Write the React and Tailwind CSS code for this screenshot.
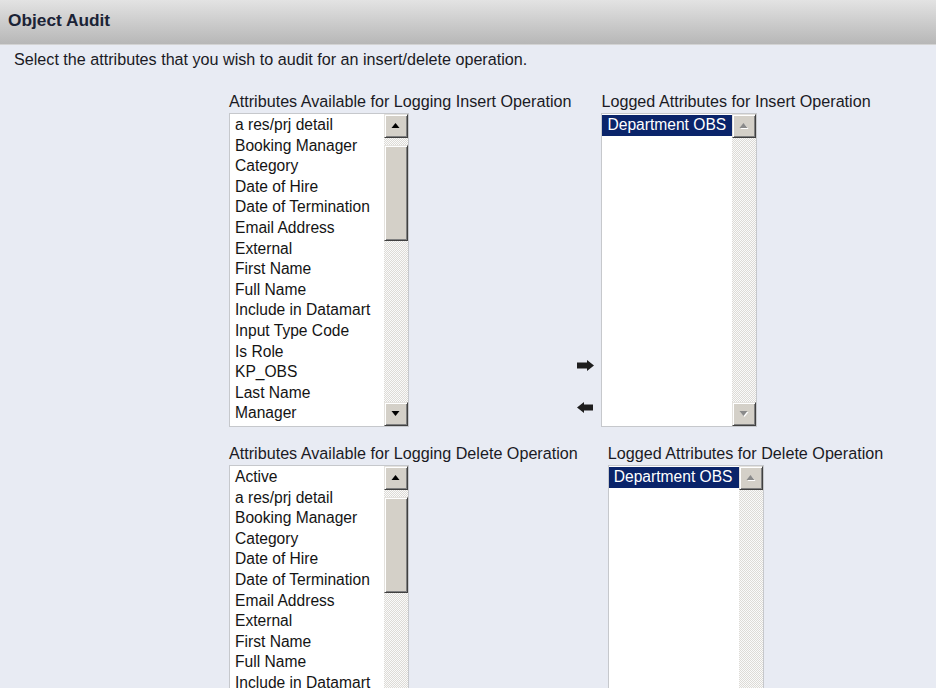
import React from 'react';

// Attribute lists shown in the two pick boxes
const insertAvailable = [
  'a res/prj detail',
  'Booking Manager',
  'Category',
  'Date of Hire',
  'Date of Termination',
  'Email Address',
  'External',
  'First Name',
  'Full Name',
  'Include in Datamart',
  'Input Type Code',
  'Is Role',
  'KP_OBS',
  'Last Name',
  'Manager',
];

const deleteAvailable = ['Active', ...insertAvailable.slice(0, 10)];

const Triangle = ({ dir = 'up', disabled = false }) => (
  <svg width="10" height="7" viewBox="0 0 10 7">
    {disabled && (
      <polygon
        points={dir === 'up' ? '1.5,6 5.5,1 9.5,6' : '1.5,1 9.5,1 5.5,6'}
        fill="#ffffff"
      />
    )}
    <polygon
      points={dir === 'up' ? '0.5,5 4.5,0 8.5,5' : '0.5,0 8.5,0 4.5,5'}
      fill={disabled ? '#8a8a8a' : '#000000'}
    />
  </svg>
);

// Classic raised 3D button face
const Raised = ({ className = '', children }) => (
  <div
    className={`flex items-center justify-center bg-[#d4d0c8] border border-t-[#e4e2de] border-l-[#e4e2de] border-b-[#404040] border-r-[#404040] shadow-[inset_1px_1px_0_#ffffff,inset_-1px_-1px_0_#808080] ${className}`}
  >
    {children}
  </div>
);

const ScrollBar = ({ disabled }) => (
  <div className="flex flex-col w-[24px] h-full bg-[repeating-conic-gradient(#dddbd6_0_25%,#fafafa_0_50%)] bg-[length:2px_2px]">
    <Raised className="h-[24px] w-[24px] shrink-0">
      <Triangle dir="up" disabled={disabled} />
    </Raised>
    <div className="flex-1 pt-[7px]">
      {!disabled && <Raised className="h-[96px] w-[24px]" />}
    </div>
    <Raised className="h-[24px] w-[24px] shrink-0">
      <Triangle dir="down" disabled={disabled} />
    </Raised>
  </div>
);

const ListBox = ({ items, width, selected, disabled }) => (
  <div
    className="flex bg-white border border-[#c6c8cc] h-[314px] overflow-hidden"
    style={{ width }}
  >
    <div className="flex-1 pt-[1px] overflow-hidden">
      {items.map((item) => (
        <div
          key={item}
          className={`h-[20.6px] leading-[20.6px] pl-[5px] text-[15.6px] whitespace-nowrap ${
            item === selected ? 'bg-[#0a246a] text-white' : 'text-[#141414]'
          }`}
        >
          {item}
        </div>
      ))}
    </div>
    <ScrollBar disabled={disabled} />
  </div>
);

const RightArrow = () => (
  <svg width="17" height="11" viewBox="0 0 17 11">
    <polygon points="0,2.5 10,2.5 10,0 17,5.5 10,11 10,8.5 0,8.5" fill="#1e1e1e" />
  </svg>
);

const LeftArrow = () => (
  <svg width="16" height="11" viewBox="0 0 16 11">
    <polygon points="16,2.5 7,2.5 7,0 0,5.5 7,11 7,8.5 16,8.5" fill="#1e1e1e" />
  </svg>
);

const AuditRow = ({ leftLabel, rightLabel, items }) => (
  <div className="flex">
    <div className="flex flex-col">
      <p className="text-[16.15px] leading-[18px] mb-[3px] text-[#1a1a24] whitespace-nowrap">{leftLabel}</p>
      <ListBox items={items} width={180} />
    </div>
    <div className="w-[30px] flex flex-col justify-end pl-[6px] pb-[14px] gap-[31px]">
      <RightArrow />
      <LeftArrow />
    </div>
    <div className="flex flex-col">
      <p className="text-[16.15px] leading-[18px] mb-[3px] text-[#1a1a24] whitespace-nowrap">{rightLabel}</p>
      <ListBox items={['Department OBS']} selected="Department OBS" width={156} disabled />
    </div>
  </div>
);

export default function App() {
  return (
    <div className="w-[936px] h-[688px] overflow-hidden bg-[#e8ebf3] font-['Liberation_Sans',Arial,sans-serif]">
      <div className="h-[45px] bg-gradient-to-b from-[#e3e3e3] to-[#b7b7b7] border-b border-[#d3d3d3] flex items-center pl-[8px] pb-[3px]">
        <h1 className="text-[17.3px] font-bold text-[#1b2336]">Object Audit</h1>
      </div>
      <p className="mt-[5px] pl-[14px] text-[16.15px] leading-[18px] text-[#1a1a24]">
        Select the attributes that you wish to audit for an insert/delete operation.
      </p>
      <div className="pl-[229px] mt-[24px] flex flex-col gap-[17px]">
        <AuditRow
          leftLabel="Attributes Available for Logging Insert Operation"
          rightLabel="Logged Attributes for Insert Operation"
          items={insertAvailable}
        />
        <AuditRow
          leftLabel="Attributes Available for Logging Delete Operation"
          rightLabel="Logged Attributes for Delete Operation"
          items={deleteAvailable}
        />
      </div>
    </div>
  );
}
